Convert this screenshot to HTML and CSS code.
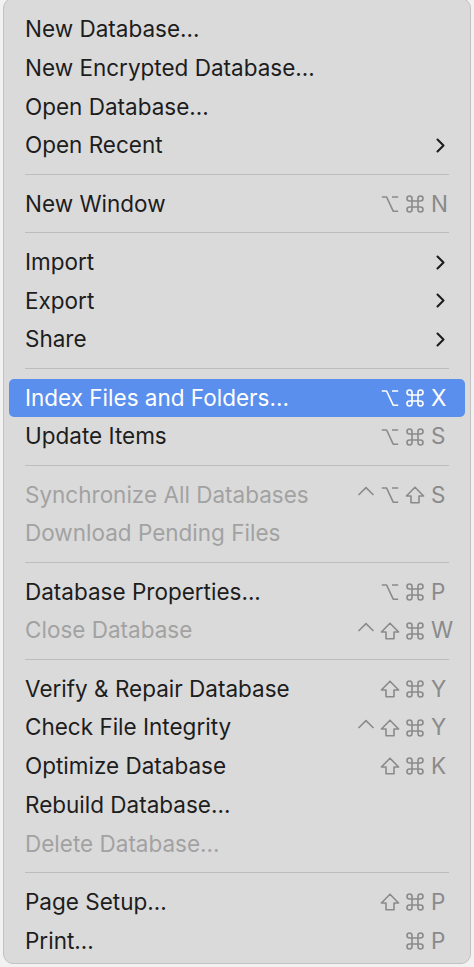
FILE: index.html
```html
<!DOCTYPE html>
<html lang="en">
<head>
    <meta charset="UTF-8">
    <title>File menu</title>
    <link rel="stylesheet" href="styles.css">
</head>
<body>
<div class="menu">
    <!--新建 / 打开-->
    <div class="item"><span class="label">New Database...</span></div>
    <div class="item"><span class="label">New Encrypted Database...</span></div>
    <div class="item"><span class="label">Open Database...</span></div>
    <div class="item">
        <span class="label">Open Recent</span>
        <svg class="chevron" width="11" height="15" viewBox="0 0 11 15"><path d="M2.5 1.5 L8.5 7.5 L2.5 13.5"/></svg>
    </div>
    <div class="sep"></div>

    <div class="item">
        <span class="label">New Window</span>
        <span class="keys">
            <span class="mod"><svg width="18" height="18" viewBox="0 0 18 18"><path d="M0.8 2 H5.6 L12.2 16.2 H17.2 M11 2 H17.2"/></svg></span>
            <span class="mod"><svg width="18" height="18" viewBox="0 0 18 18"><path d="M6 6 V3.5 A2.5 2.5 0 1 0 3.5 6 H14.5 A2.5 2.5 0 1 0 12 3.5 V14.5 A2.5 2.5 0 1 0 14.5 12 H3.5 A2.5 2.5 0 1 0 6 14.5 Z"/></svg></span>
            <span class="key">N</span>
        </span>
    </div>
    <div class="sep"></div>

    <!--导入导出-->
    <div class="item">
        <span class="label">Import</span>
        <svg class="chevron" width="11" height="15" viewBox="0 0 11 15"><path d="M2.5 1.5 L8.5 7.5 L2.5 13.5"/></svg>
    </div>
    <div class="item">
        <span class="label">Export</span>
        <svg class="chevron" width="11" height="15" viewBox="0 0 11 15"><path d="M2.5 1.5 L8.5 7.5 L2.5 13.5"/></svg>
    </div>
    <div class="item">
        <span class="label">Share</span>
        <svg class="chevron" width="11" height="15" viewBox="0 0 11 15"><path d="M2.5 1.5 L8.5 7.5 L2.5 13.5"/></svg>
    </div>
    <div class="sep"></div>

    <div class="item active">
        <span class="label">Index Files and Folders...</span>
        <span class="keys">
            <span class="mod"><svg width="18" height="18" viewBox="0 0 18 18"><path d="M0.8 2 H5.6 L12.2 16.2 H17.2 M11 2 H17.2"/></svg></span>
            <span class="mod"><svg width="18" height="18" viewBox="0 0 18 18"><path d="M6 6 V3.5 A2.5 2.5 0 1 0 3.5 6 H14.5 A2.5 2.5 0 1 0 12 3.5 V14.5 A2.5 2.5 0 1 0 14.5 12 H3.5 A2.5 2.5 0 1 0 6 14.5 Z"/></svg></span>
            <span class="key">X</span>
        </span>
    </div>
    <div class="item">
        <span class="label">Update Items</span>
        <span class="keys">
            <span class="mod"><svg width="18" height="18" viewBox="0 0 18 18"><path d="M0.8 2 H5.6 L12.2 16.2 H17.2 M11 2 H17.2"/></svg></span>
            <span class="mod"><svg width="18" height="18" viewBox="0 0 18 18"><path d="M6 6 V3.5 A2.5 2.5 0 1 0 3.5 6 H14.5 A2.5 2.5 0 1 0 12 3.5 V14.5 A2.5 2.5 0 1 0 14.5 12 H3.5 A2.5 2.5 0 1 0 6 14.5 Z"/></svg></span>
            <span class="key">S</span>
        </span>
    </div>
    <div class="sep"></div>

    <!--同步-->
    <div class="item disabled">
        <span class="label">Synchronize All Databases</span>
        <span class="keys">
            <span class="mod"><svg width="18" height="18" viewBox="0 0 18 18"><path d="M1.5 9 L9 1.6 L16.5 9"/></svg></span>
            <span class="mod"><svg width="18" height="18" viewBox="0 0 18 18"><path d="M0.8 2 H5.6 L12.2 16.2 H17.2 M11 2 H17.2"/></svg></span>
            <span class="mod"><svg width="20" height="18" viewBox="0 0 20 18"><path d="M10 1.2 L18.6 10 H14 V16.8 H6 V10 H1.4 Z"/></svg></span>
            <span class="key">S</span>
        </span>
    </div>
    <div class="item disabled">
        <span class="label">Download Pending Files</span>
    </div>
    <div class="sep"></div>

    <div class="item">
        <span class="label">Database Properties...</span>
        <span class="keys">
            <span class="mod"><svg width="18" height="18" viewBox="0 0 18 18"><path d="M0.8 2 H5.6 L12.2 16.2 H17.2 M11 2 H17.2"/></svg></span>
            <span class="mod"><svg width="18" height="18" viewBox="0 0 18 18"><path d="M6 6 V3.5 A2.5 2.5 0 1 0 3.5 6 H14.5 A2.5 2.5 0 1 0 12 3.5 V14.5 A2.5 2.5 0 1 0 14.5 12 H3.5 A2.5 2.5 0 1 0 6 14.5 Z"/></svg></span>
            <span class="key">P</span>
        </span>
    </div>
    <div class="item disabled">
        <span class="label">Close Database</span>
        <span class="keys">
            <span class="mod"><svg width="18" height="18" viewBox="0 0 18 18"><path d="M1.5 9 L9 1.6 L16.5 9"/></svg></span>
            <span class="mod"><svg width="20" height="18" viewBox="0 0 20 18"><path d="M10 1.2 L18.6 10 H14 V16.8 H6 V10 H1.4 Z"/></svg></span>
            <span class="mod"><svg width="18" height="18" viewBox="0 0 18 18"><path d="M6 6 V3.5 A2.5 2.5 0 1 0 3.5 6 H14.5 A2.5 2.5 0 1 0 12 3.5 V14.5 A2.5 2.5 0 1 0 14.5 12 H3.5 A2.5 2.5 0 1 0 6 14.5 Z"/></svg></span>
            <span class="key">W</span>
        </span>
    </div>
    <div class="sep"></div>

    <!--维护-->
    <div class="item">
        <span class="label">Verify &amp; Repair Database</span>
        <span class="keys">
            <span class="mod"><svg width="20" height="18" viewBox="0 0 20 18"><path d="M10 1.2 L18.6 10 H14 V16.8 H6 V10 H1.4 Z"/></svg></span>
            <span class="mod"><svg width="18" height="18" viewBox="0 0 18 18"><path d="M6 6 V3.5 A2.5 2.5 0 1 0 3.5 6 H14.5 A2.5 2.5 0 1 0 12 3.5 V14.5 A2.5 2.5 0 1 0 14.5 12 H3.5 A2.5 2.5 0 1 0 6 14.5 Z"/></svg></span>
            <span class="key">Y</span>
        </span>
    </div>
    <div class="item">
        <span class="label">Check File Integrity</span>
        <span class="keys">
            <span class="mod"><svg width="18" height="18" viewBox="0 0 18 18"><path d="M1.5 9 L9 1.6 L16.5 9"/></svg></span>
            <span class="mod"><svg width="20" height="18" viewBox="0 0 20 18"><path d="M10 1.2 L18.6 10 H14 V16.8 H6 V10 H1.4 Z"/></svg></span>
            <span class="mod"><svg width="18" height="18" viewBox="0 0 18 18"><path d="M6 6 V3.5 A2.5 2.5 0 1 0 3.5 6 H14.5 A2.5 2.5 0 1 0 12 3.5 V14.5 A2.5 2.5 0 1 0 14.5 12 H3.5 A2.5 2.5 0 1 0 6 14.5 Z"/></svg></span>
            <span class="key">Y</span>
        </span>
    </div>
    <div class="item">
        <span class="label">Optimize Database</span>
        <span class="keys">
            <span class="mod"><svg width="20" height="18" viewBox="0 0 20 18"><path d="M10 1.2 L18.6 10 H14 V16.8 H6 V10 H1.4 Z"/></svg></span>
            <span class="mod"><svg width="18" height="18" viewBox="0 0 18 18"><path d="M6 6 V3.5 A2.5 2.5 0 1 0 3.5 6 H14.5 A2.5 2.5 0 1 0 12 3.5 V14.5 A2.5 2.5 0 1 0 14.5 12 H3.5 A2.5 2.5 0 1 0 6 14.5 Z"/></svg></span>
            <span class="key">K</span>
        </span>
    </div>
    <div class="item"><span class="label">Rebuild Database...</span></div>
    <div class="item disabled"><span class="label">Delete Database...</span></div>
    <div class="sep"></div>

    <!--打印-->
    <div class="item">
        <span class="label">Page Setup...</span>
        <span class="keys">
            <span class="mod"><svg width="20" height="18" viewBox="0 0 20 18"><path d="M10 1.2 L18.6 10 H14 V16.8 H6 V10 H1.4 Z"/></svg></span>
            <span class="mod"><svg width="18" height="18" viewBox="0 0 18 18"><path d="M6 6 V3.5 A2.5 2.5 0 1 0 3.5 6 H14.5 A2.5 2.5 0 1 0 12 3.5 V14.5 A2.5 2.5 0 1 0 14.5 12 H3.5 A2.5 2.5 0 1 0 6 14.5 Z"/></svg></span>
            <span class="key">P</span>
        </span>
    </div>
    <div class="item">
        <span class="label">Print...</span>
        <span class="keys">
            <span class="mod"><svg width="18" height="18" viewBox="0 0 18 18"><path d="M6 6 V3.5 A2.5 2.5 0 1 0 3.5 6 H14.5 A2.5 2.5 0 1 0 12 3.5 V14.5 A2.5 2.5 0 1 0 14.5 12 H3.5 A2.5 2.5 0 1 0 6 14.5 Z"/></svg></span>
            <span class="key">P</span>
        </span>
    </div>
</div>
</body>
</html>
```

FILE: styles.css
```css
*{
    margin: 0px;
    padding: 0px;
    box-sizing: border-box;
}
body{
    background-color: #f2f2f2;
    font-family: Inter, "Noto Sans", sans-serif;
    font-size: 22.5px;
    color: #1d1d1d;
}
.menu{
    width: 468px;
    margin: -2px 3px 0 3px;
    padding: 11px 5px 3px 5px;
    background-color: #dadada;
    border: 1px solid #c2c2c2;
    /*菜单圆角*/
    border-radius: 10px;
}
.item{
    height: 38.75px;
    display: flex;
    align-items: center;
    justify-content: space-between;
    padding: 0 15px 0 16px;
    border-radius: 5px;
    line-height: 1;
}
.item.active{
    background-color: #5a8fee;
    color: #ffffff;
}
.item.disabled{
    color: #a2a2a2;
}
.sep{
    margin: 9px 16px 9.5px 16px;
    border-top: 1px solid #bdbdbd;
}
.chevron{
    margin-right: 4px;
}
.chevron path{
    fill: none;
    stroke: #1d1d1d;
    stroke-width: 2.1;
    stroke-linecap: round;
    stroke-linejoin: round;
}
.keys{
    display: flex;
    align-items: center;
    color: #8a8a8a;
}
.item.active .keys{
    color: #ffffff;
}
.mod{
    width: 24.5px;
    display: flex;
    justify-content: center;
}
.mod svg{
    display: block;
}
.mod path{
    fill: none;
    stroke: currentColor;
    stroke-width: 1.6;
    stroke-linejoin: round;
}
.key{
    width: 23px;
    padding-left: 4px;
}
```
